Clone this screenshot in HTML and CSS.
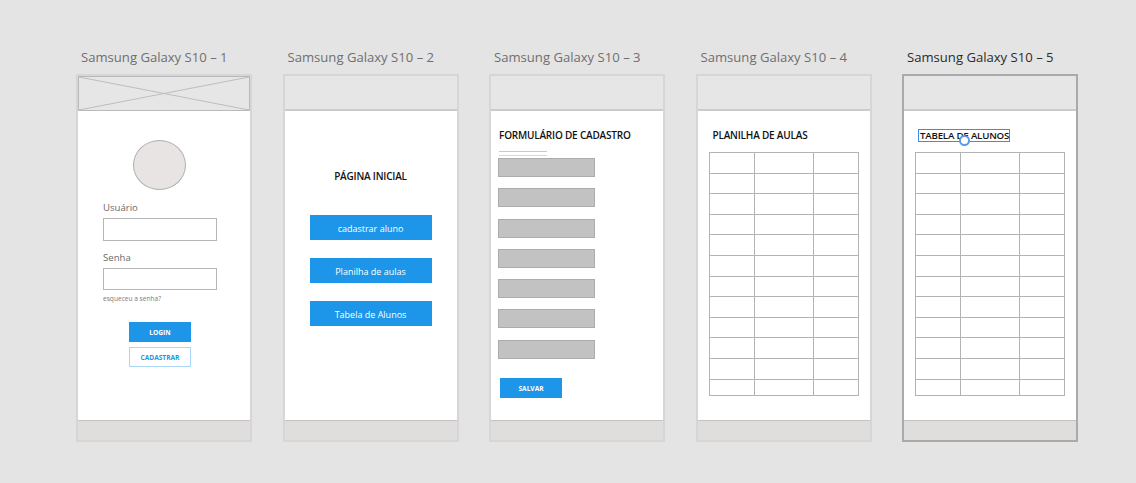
FILE: index.html
```html
<!DOCTYPE html>
<html lang="pt">
<head>
<meta charset="utf-8">
<title>Samsung Galaxy S10</title>
<link rel="stylesheet" href="styles.css">
</head>
<body>
<main class="canvas">
  <section class="artboard">
    <h2 class="name">Samsung Galaxy S10 – 1</h2>
    <div class="phone">
      <div class="bar top crossed">
        <svg class="cross" viewBox="0 0 173 34" preserveAspectRatio="none"><path d="M0 0L173 34M173 0L0 34"/></svg>
      </div>
      <div class="screen login">
        <div class="avatar"></div>
        <label class="label first">Usuário</label>
        <div class="input"></div>
        <label class="label second">Senha</label>
        <div class="input short"></div>
        <p class="hint">esqueceu a senha?</p>
        <div class="btn small solid login-btn">LOGIN</div>
        <div class="btn small outline">CADASTRAR</div>
      </div>
      <div class="bar bottom"></div>
    </div>
  </section>

  <section class="artboard">
    <h2 class="name">Samsung Galaxy S10 – 2</h2>
    <div class="phone">
      <div class="bar top"></div>
      <div class="screen home">
        <h3 class="title centered">PÁGINA INICIAL</h3>
        <div class="btn wide">cadastrar aluno</div>
        <div class="btn wide">Planilha de aulas</div>
        <div class="btn wide">Tabela de Alunos</div>
      </div>
      <div class="bar bottom"></div>
    </div>
  </section>

  <section class="artboard">
    <h2 class="name">Samsung Galaxy S10 – 3</h2>
    <div class="phone">
      <div class="bar top"></div>
      <div class="screen form">
        <h3 class="title">FORMULÁRIO DE CADASTRO</h3>
        <div class="rule"></div>
        <div class="field"></div>
        <div class="field"></div>
        <div class="field"></div>
        <div class="field"></div>
        <div class="field"></div>
        <div class="field"></div>
        <div class="field"></div>
        <div class="btn small solid save">SALVAR</div>
      </div>
      <div class="bar bottom"></div>
    </div>
  </section>

  <section class="artboard">
    <h2 class="name">Samsung Galaxy S10 – 4</h2>
    <div class="phone">
      <div class="bar top"></div>
      <div class="screen sheet">
        <h3 class="title sheet-title">PLANILHA DE AULAS</h3>
        <table class="grid">
          <tr><td></td><td></td><td></td></tr><tr><td></td><td></td><td></td></tr>
          <tr><td></td><td></td><td></td></tr><tr><td></td><td></td><td></td></tr>
          <tr><td></td><td></td><td></td></tr><tr><td></td><td></td><td></td></tr>
          <tr><td></td><td></td><td></td></tr><tr><td></td><td></td><td></td></tr>
          <tr><td></td><td></td><td></td></tr><tr><td></td><td></td><td></td></tr>
          <tr><td></td><td></td><td></td></tr><tr class="last"><td></td><td></td><td></td></tr>
        </table>
      </div>
      <div class="bar bottom"></div>
    </div>
  </section>

  <section class="artboard selected">
    <h2 class="name">Samsung Galaxy S10 – 5</h2>
    <div class="phone">
      <div class="bar top"></div>
      <div class="screen sheet">
        <h3 class="title picked">TABELA DE ALUNOS<span class="handle"></span></h3>
        <table class="grid">
          <tr><td></td><td></td><td></td></tr><tr><td></td><td></td><td></td></tr>
          <tr><td></td><td></td><td></td></tr><tr><td></td><td></td><td></td></tr>
          <tr><td></td><td></td><td></td></tr><tr><td></td><td></td><td></td></tr>
          <tr><td></td><td></td><td></td></tr><tr><td></td><td></td><td></td></tr>
          <tr><td></td><td></td><td></td></tr><tr><td></td><td></td><td></td></tr>
          <tr><td></td><td></td><td></td></tr><tr class="last"><td></td><td></td><td></td></tr>
        </table>
      </div>
      <div class="bar bottom"></div>
    </div>
  </section>
</main>
</body>
</html>
```
FILE: styles.css
```css
* { box-sizing: border-box; }
html, body { margin: 0; height: 100%; }
body {
  background: #e4e4e4;
  font-family: "Open Sans", "Noto Sans", sans-serif;
  overflow: hidden;
}
.canvas {
  display: flex;
  gap: 30.5px;
  padding: 47px 0 0 76px;
}
.artboard { width: 176px; flex: none; }
.name {
  margin: 0 0 0 5px;
  height: 27px;
  line-height: 20px;
  font-size: 13.1px;
  font-weight: 400;
  color: #6f6f6f;
  white-space: nowrap;
}
.selected .name { color: #2b2b2b; }
.phone {
  width: 176px;
  height: 368px;
  display: flex;
  flex-direction: column;
  border: 2px solid #d6d6d6;
  background: #fff;
}
.selected .phone { border-color: #aaa; }
.bar { flex: none; }
.top {
  height: 35px;
  background: #e6e6e6;
  border-bottom: 2px solid #cbcbcb;
}
.crossed { border: 1px solid #b9b9b9; }
.cross { display: block; width: 100%; height: 100%; }
.cross path { stroke: #bdbdbd; stroke-width: 1; fill: none; vector-effect: non-scaling-stroke; }
.bottom {
  height: 20px;
  background: #e0dddd;
  border-top: 1px solid #c4c2c2;
}
.screen { flex: 1; min-height: 0; display: flex; flex-direction: column; }

/* login */
.login { padding: 29px 0 0 25px; }
.avatar {
  width: 53px;
  height: 50px;
  margin-left: 30px;
  border-radius: 50%;
  background: #e8e4e4;
  border: 1px solid #b2aeae;
}
.label { font-size: 9.6px; line-height: 14px; color: #6a6a6a; }
.label.first { margin-top: 11px; }
.label.second { margin-top: 10px; }
.input {
  width: 114px;
  height: 23px;
  margin-top: 3px;
  border: 1px solid #b5b5b5;
  background: #fff;
}
.input.short { height: 22px; }
.hint { margin: 4px 0 0; font-size: 6.6px; line-height: 10px; color: #7d7d7d; }

/* buttons */
.btn {
  display: flex;
  align-items: center;
  justify-content: center;
  background: #1d95e8;
  color: #fff;
}
.small {
  width: 62px;
  height: 20px;
  font-size: 6.6px;
  font-weight: 700;
}
.login-btn { margin: 18px 0 0 26px; }
.outline {
  margin: 5px 0 0 26px;
  background: #fff;
  color: #1d95e8;
  border: 1px solid #a9d6f5;
}
.wide {
  width: 122px;
  height: 25px;
  margin: 0 0 18px 25px;
  padding-top: 1px;
  font-size: 9px;
}
.save { margin: 8px 0 0 1px; }

/* headings */
.title {
  margin: 0;
  font-size: 10px;
  letter-spacing: -0.2px;
  line-height: 14px;
  font-weight: 600;
  color: #111;
  white-space: nowrap;
}
.centered { text-align: center; margin-bottom: 32px; }
.home { padding-top: 58px; }

/* form */
.form { padding: 17px 0 0 8px; }
.rule {
  width: 48px;
  height: 5px;
  margin: 9px 0 2px;
  border-top: 1px solid #c9c9c9;
  border-bottom: 1px solid #d6d6d6;
}
.field {
  width: 97px;
  height: 19px;
  margin: 0 0 11.3px -1px;
  background: #c2c2c2;
  border: 1px solid #acacac;
}

/* tables */
.sheet { padding: 17px 0 0 11px; }
.sheet-title { padding-left: 4px; }
.picked {
  position: relative;
  align-self: flex-start;
  margin: 1px 0 0 3px;
  padding-left: 1px;
  width: 92px;
  height: 13px;
  line-height: 11px;
  border: 1px solid #3f8ae8;
  font-size: 9.7px;
}
.handle {
  position: absolute;
  left: 40px;
  top: 5px;
  width: 11px;
  height: 11px;
  border-radius: 50%;
  background: #fff;
  border: 2px solid #5a9bea;
}
.grid {
  width: 150px;
  height: 243px;
  margin-top: 10px;
  border-collapse: collapse;
  table-layout: fixed;
}
.grid td {
  padding: 0;
  height: 20.6px;
  border: 1px solid #b3b3b3;
}
.grid .last td { height: 16px; }
.grid td:nth-child(1) { width: 45px; }
.grid td:nth-child(2) { width: 59px; }
```
